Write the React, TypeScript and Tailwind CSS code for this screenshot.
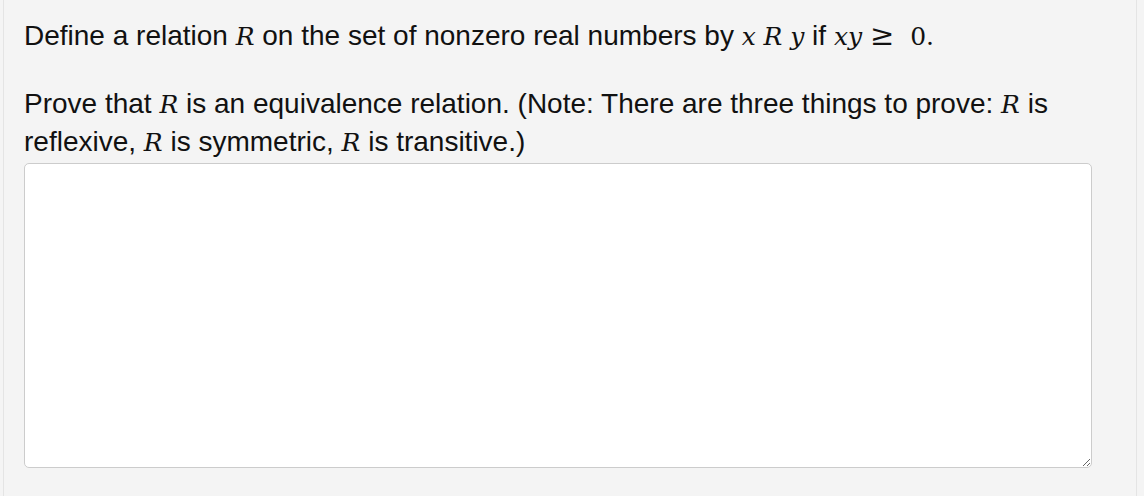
const M = ({ children }: { children: React.ReactNode }) => (
  <span className="font-['DejaVu_Serif',serif] italic text-[25px] leading-none">{children}</span>
)

export default function App() {
  return (
    <div className="h-[496px] w-[1144px] bg-[#f4f4f4] font-['Liberation_Sans',Arial,sans-serif] text-[28px] leading-[38px] text-[#111]">
      <div className="h-full mx-[3px] w-[1134px] border-l border-r border-[#e4e4e4] pl-[20px] pr-[44px] pt-[17px]">
        <p>
          Define a relation <M>R</M> on the set of nonzero real numbers by <M>x</M> <M>R</M> <M>y</M> if{" "}
          <M>xy</M>{" "}
          <span className="font-['DejaVu_Serif',serif] text-[25px] leading-none">
            <span className="text-[29px]">≥</span> <span className="ml-[8px]">0</span>.
          </span>
        </p>
        <p className="mt-[30px]">
          Prove that <M>R</M> is an equivalence relation. (Note: There are three things to prove: <M>R</M> is
          reflexive, <M>R</M> is symmetric, <M>R</M> is transitive.)
        </p>
        <textarea className="mt-[2px] block h-[305px] w-[1068px] rounded-[5px] border border-[#cccccc] bg-white resize" />
      </div>
    </div>
  )
}
